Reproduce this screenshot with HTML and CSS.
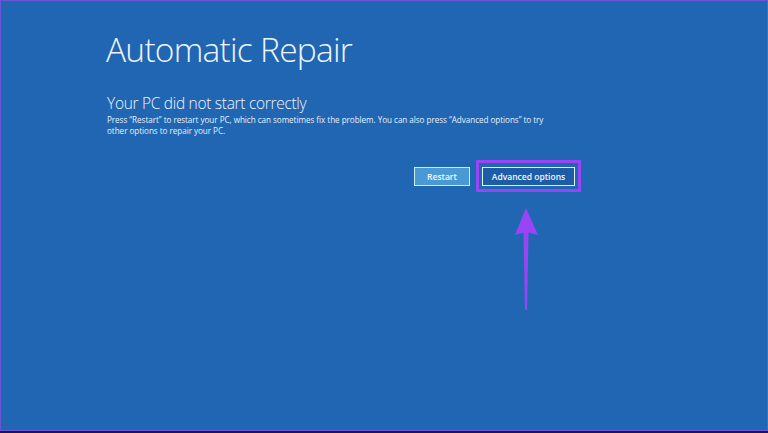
FILE: index.html
```html
<!DOCTYPE html>
<html>
<head>
<meta charset="utf-8">
<link rel="stylesheet" href="styles.css">
</head>
<body>
<div class="screen">
  <div class="content">
    <h1 class="title">Automatic Repair</h1>
    <h2 class="subtitle">Your PC did not start correctly</h2>
    <p class="desc">Press “Restart” to restart your PC, which can sometimes fix the problem. You can also press “Advanced options” to try other options to repair your PC.</p>
    <div class="actions">
      <button class="btn btn-restart">Restart</button>
      <div class="highlight">
        <button class="btn btn-advanced">Advanced options</button>
      </div>
    </div>
  </div>
  <svg class="arrow" width="40" height="112" viewBox="0 0 40 112">
    <path d="M16 4 L5 31 L13.5 28.5 L15 106 L17 106 L18.5 28.5 L28 31 Z" fill="#9a45f4"/>
  </svg>
</div>
</body>
</html>
```
FILE: styles.css
```css
html, body {
  margin: 0;
  padding: 0;
}
body {
  width: 768px;
  height: 433px;
  overflow: hidden;
  background: #1b1650;
}
.screen {
  position: relative;
  box-sizing: border-box;
  width: 768px;
  height: 431px;
  background: #2166b3;
  border: 1px solid #6a55d8;
  font-family: "Open Sans", "Noto Sans", sans-serif;
  color: #e9f2fb;
}
.content {
  width: 475px;
  padding: 25px 0 0 105px;
}
.title {
  margin: 0;
  font-weight: 300;
  font-size: 33.5px;
  line-height: 46px;
  letter-spacing: -0.75px;
  color: #eef5fc;
}
.subtitle {
  margin: 21px 0 0 1px;
  font-weight: 300;
  font-size: 15.5px;
  line-height: 20px;
  letter-spacing: -0.3px;
  color: #eef5fc;
}
.desc {
  margin: 1px 0 0 1px;
  font-size: 8.15px;
  line-height: 11px;
  letter-spacing: -0.05px;
  color: #e6f0fa;
  width: 456px;
}
.actions {
  display: flex;
  justify-content: flex-end;
  align-items: center;
  gap: 6px;
  margin-top: 24px;
}
.btn {
  font-family: "Open Sans", "Noto Sans", sans-serif;
  font-weight: 600;
  font-size: 8.5px;
  color: #f2f8fd;
  height: 19px;
  box-sizing: border-box;
  padding: 0;
  margin: 0;
}
.btn-restart {
  width: 56px;
  background: #4a98d4;
  border: 1.5px solid #c6ecf4;
}
.btn-advanced {
  width: 93px;
  background: #1d5ca6;
  border: 1.5px solid #dff3f7;
  display: block;
}
.highlight {
  border: 3px solid #9845f6;
  padding: 4px 3px 3px 3px;
}
.arrow {
  position: absolute;
  left: 509px;
  top: 203px;
}
```
